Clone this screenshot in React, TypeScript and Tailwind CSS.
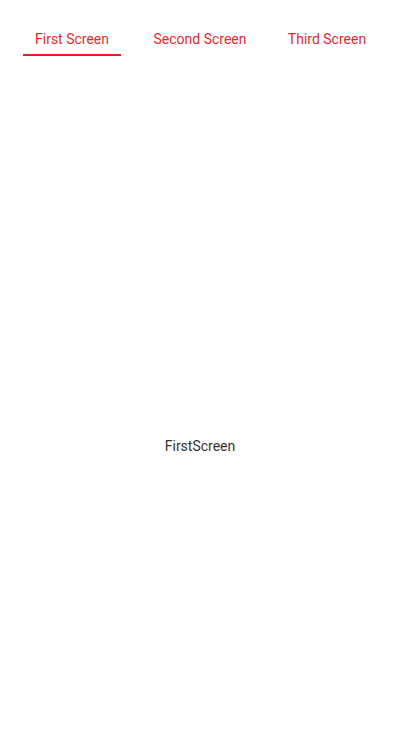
export default function App() {
  return (
    <div className="w-[400px] h-[750px] bg-white flex flex-col" style={{ fontFamily: "Roboto, 'Noto Sans', sans-serif" }}>
      <div className="flex pt-[29px] pl-[23px]">
        <div className="w-[98px] flex flex-col items-center">
          <span className="text-[14px] leading-[20px] text-[#e8282e]">First Screen</span>
          <div className="mt-[5px] h-[2px] w-full bg-[#ee1c25]" />
        </div>
        <div className="ml-[20px] w-[118px] flex flex-col items-center">
          <span className="text-[14px] leading-[20px] text-[#e8282e]">Second Screen</span>
        </div>
        <div className="ml-[17px] w-[102px] flex flex-col items-center">
          <span className="text-[14px] leading-[20px] text-[#e8282e]">Third Screen</span>
        </div>
      </div>
      <div className="flex-1 flex items-center justify-center pt-[86px]">
        <span className="text-[14px] text-[#333333]">FirstScreen</span>
      </div>
    </div>
  );
}
